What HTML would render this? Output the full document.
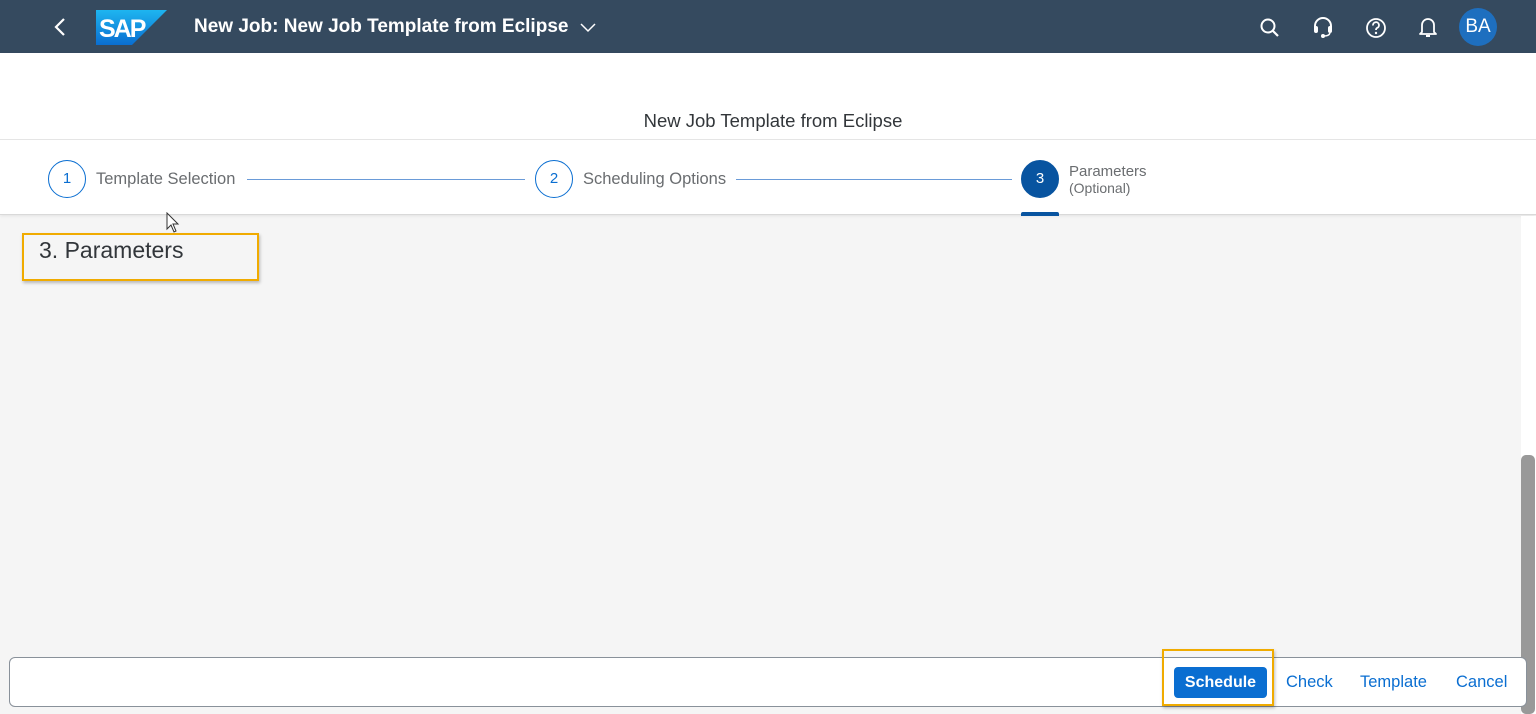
<!DOCTYPE html>
<html><head><meta charset="utf-8"><style>
*{margin:0;padding:0;box-sizing:border-box}
body{width:1536px;height:714px;overflow:hidden;background:#f5f5f5;font-family:"Liberation Sans",sans-serif;position:relative}
.hdr{position:absolute;left:0;top:0;width:1536px;height:53px;background:#354a5f}
.abs{position:absolute}
.white{position:absolute;left:0;top:53px;width:1536px;height:162px;background:#fff;border-bottom:1px solid #d9d9d9;box-shadow:0 1px 3px rgba(0,0,0,.08)}
.circ{position:absolute;width:38px;height:38px;border-radius:50%;border:1px solid #0a6ed1;color:#0a6ed1;font-size:15px;text-align:center;line-height:36px;background:#fff}
.lbl{position:absolute;color:#6a6d70;font-size:16.5px}
.line{position:absolute;height:1px;background:#6a9bd8;top:179px}
</style></head><body>
<div class="hdr">
<svg class="abs" style="left:52px;top:17px" width="16" height="20"><path d="M12 2 L4 10 L12 18" stroke="#fff" stroke-width="2.2" fill="none"/></svg>
<svg class="abs" style="left:96px;top:10px" width="72" height="36"><defs><linearGradient id="g" x1="0" y1="0" x2="0" y2="1"><stop offset="0" stop-color="#1eb5f0"/><stop offset="1" stop-color="#0a6ed1"/></linearGradient></defs><path d="M0 0 H71 L36 35 H0 Z" fill="url(#g)"/><text x="3" y="27" font-family="Liberation Sans" font-weight="bold" font-size="25" fill="#fff" letter-spacing="-2">SAP</text></svg>
<div class="abs" style="left:194px;top:16px;color:#fff;font-size:19px;font-weight:bold">New Job: New Job Template from Eclipse</div>
<svg class="abs" style="left:580px;top:21px" width="16" height="12"><path d="M1 3 L8 10 L15 3" stroke="#fff" stroke-width="1.5" fill="none"/></svg>
<svg class="abs" style="left:1259px;top:17px" width="22" height="22"><circle cx="9" cy="9" r="6.5" stroke="#fff" stroke-width="2" fill="none"/><path d="M14 14 L19 19" stroke="#fff" stroke-width="2.2"/></svg>
<svg class="abs" style="left:1311px;top:15px" width="24" height="24"><path d="M4 14 V11 A8 8 0 0 1 20 11 V14" stroke="#fff" stroke-width="2" fill="none"/><rect x="3" y="11" width="4" height="7" rx="2" fill="#fff"/><rect x="17" y="11" width="4" height="7" rx="2" fill="#fff"/><path d="M19 18 Q18 21 13 21" stroke="#fff" stroke-width="1.5" fill="none"/><circle cx="12" cy="21" r="2" fill="#fff"/></svg>
<svg class="abs" style="left:1364px;top:16px" width="24" height="24"><circle cx="12" cy="12" r="9" stroke="#fff" stroke-width="1.8" fill="none"/><path d="M9 9.5 A3 3 0 1 1 13 12 Q12 12.5 12 14" stroke="#fff" stroke-width="1.8" fill="none"/><circle cx="12" cy="17" r="1.2" fill="#fff"/></svg>
<svg class="abs" style="left:1417px;top:15px" width="22" height="24"><path d="M5 17 V10 A6 6 0 0 1 17 10 V17 L19 19 H3 Z" stroke="#fff" stroke-width="1.8" fill="none" stroke-linejoin="round"/><path d="M9 21 H13" stroke="#fff" stroke-width="2"/></svg>
<div class="abs" style="left:1459px;top:8px;width:38px;height:38px;border-radius:50%;background:#1e6fbf;color:#fff;font-size:19px;text-align:center;line-height:38px">BA</div>
</div>
<div class="white"></div>
<div class="abs" style="left:0;top:139px;width:1536px;height:1px;background:#e5e5e5"></div>
<div class="abs" style="left:0;top:110px;width:1546px;text-align:center;color:#32363a;font-size:18.5px">New Job Template from Eclipse</div>
<div class="circ" style="left:48px;top:160px">1</div>
<div class="lbl" style="left:96px;top:170px">Template Selection</div>
<div class="line" style="left:247px;width:278px"></div>
<div class="circ" style="left:535px;top:160px">2</div>
<div class="lbl" style="left:583px;top:170px">Scheduling Options</div>
<div class="line" style="left:736px;width:276px"></div>
<div class="circ" style="left:1021px;top:160px;background:#0854a0;border-color:#0854a0;color:#fff">3</div>
<div class="lbl" style="left:1069px;top:163px;font-size:15px">Parameters</div>
<div class="lbl" style="left:1069px;top:180px;font-size:14px">(Optional)</div>
<div class="abs" style="left:1021px;top:212px;width:38px;height:4px;background:#0854a0;border-radius:2px 2px 0 0"></div>
<div class="abs" style="left:22px;top:233px;width:237px;height:48px;border:2px solid #f0ab00;box-shadow:1px 2px 3px rgba(0,0,0,.25)"></div>
<div class="abs" style="left:39px;top:237px;color:#32363a;font-size:23px">3. Parameters</div>
<div class="abs" style="left:1521px;top:216px;width:15px;height:498px;background:#fff"></div>
<div class="abs" style="left:1521px;top:455px;width:14px;height:259px;background:#999;border-radius:5px"></div>
<div class="abs" style="left:9px;top:657px;width:1518px;height:50px;background:#fff;border:1px solid #89919a;border-radius:6px"></div>
<div class="abs" style="left:1162px;top:649px;width:112px;height:57px;border:2px solid #f0ab00;box-shadow:1px 2px 3px rgba(0,0,0,.25)"></div>
<div class="abs" style="left:1174px;top:667px;width:93px;height:31px;background:#0a6ed1;border-radius:4px;color:#fff;font-weight:bold;font-size:16px;text-align:center;line-height:31px">Schedule</div>
<div class="abs" style="left:1286px;top:673px;color:#0a6ed1;font-size:16.5px">Check</div>
<div class="abs" style="left:1360px;top:673px;color:#0a6ed1;font-size:16.5px">Template</div>
<div class="abs" style="left:1456px;top:673px;color:#0a6ed1;font-size:16.5px">Cancel</div>
<svg class="abs" style="left:166px;top:212px" width="14" height="22"><path d="M1 1 V17 L5 13 L8 20 L10 19 L7 12 H12 Z" fill="#fff" stroke="#333" stroke-width="1"/></svg>
</body></html>
